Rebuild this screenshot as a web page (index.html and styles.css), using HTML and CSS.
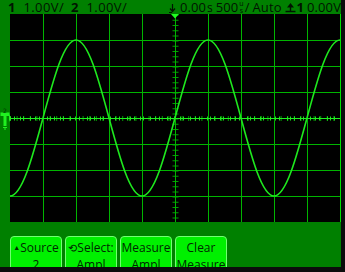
FILE: index.html
```html
<!DOCTYPE html>
<html>
<head>
<meta charset="utf-8">
<link rel="stylesheet" href="styles.css">
</head>
<body>
<div class="scope">
  <div class="topbar">
    <div class="chans">
      <b class="chn">1</b><span class="val">1.00V/</span>
      <b class="chn chn2">2</b><span class="val">1.00V/</span>
    </div>
    <div class="timebase">
      <svg class="trig-pos" width="8" height="10" viewBox="0 0 8 10"><path d="M4.5 1V8M2 5.5L4.5 8.5L7 5.5M1 9.5H4" fill="none" stroke="#001400" stroke-width="1.2"/></svg>
      <span class="val">0.00</span><span class="unit">s</span>
      <span class="val gapl">500</span><span class="frac"><span>u</span><span>s</span></span><span class="val">/</span>
      <span class="val gapl">Auto</span>
      <svg class="slope" width="11" height="11" viewBox="0 0 11 11"><path d="M5.5 1L9 5.5H2Z" fill="#001400"/><path d="M5.5 4V9M0.5 9.5H10.5" stroke="#001400" stroke-width="1.4"/></svg>
      <b class="chn">1</b><span class="val">0.00V</span>
    </div>
  </div>
  <div class="graticule">
    <svg width="331" height="208" viewBox="0 0 331 208">
      <rect width="330" height="208" fill="#000"/>
      <g stroke="#00b400" stroke-width="1">
        <path d="M33.5 0V208M66.5 0V208M99.5 0V208M132.5 0V208M198.5 0V208M231.5 0V208M264.5 0V208M297.5 0V208"/>
        <path d="M0 26.5H330M0 52.5H330M0 78.5H330M0 130.5H330M0 156.5H330M0 182.5H330"/>
      </g>
      <path d="M330.5 0V208" stroke="#00e000" stroke-width="1"/>
      <line x1="165.5" y1="0" x2="165.5" y2="208" stroke="#00a000" stroke-width="6" stroke-dasharray="1 4.2" style="stroke-dashoffset:-0.6"/>
      <line x1="165.5" y1="0" x2="165.5" y2="208" stroke="#00b400" stroke-width="1"/>
      <line x1="0" y1="104.5" x2="330" y2="104.5" stroke="#00a000" stroke-width="5" stroke-dasharray="1 5.6"/>
      <line x1="0" y1="104.5" x2="330" y2="104.5" stroke="#20e020" stroke-width="4" stroke-dasharray="1 3 1 5 1 2 1 6 1 4 1 3 1 7 1 2"/>
      <line x1="0" y1="104.5" x2="330" y2="104.5" stroke="#20f020" stroke-width="1.2"/>
      <path d="M161 0H169L165 4.5Z" fill="#20ff20"/>
      <path d="M0 182 c11.94 0 22.24 -38.04 33 -78 c10.76 -39.96 21.06 -78 33 -78 c11.94 0 22.24 38.04 33 78 c10.76 39.96 21.06 78 33 78 c11.94 0 22.24 -38.04 33 -78 c10.76 -39.96 21.06 -78 33 -78 c11.94 0 22.24 38.04 33 78 c10.76 39.96 21.06 78 33 78 c11.94 0 22.24 -38.04 33 -78 c10.76 -39.96 21.06 -78 33 -78" fill="none" stroke="#1ee81e" stroke-width="1.6"/>
    </svg>
    <svg class="ch-marker" width="11" height="22" viewBox="0 0 11 22">
      <path d="M0.5 4.5H9.5V8H6.5V18H3.5V8H0.5Z" fill="#20f020"/>
      <path d="M9 6L11 10L9 14Z" fill="#20f020"/>
      <path d="M3 19.5H7M4 21H6" stroke="#20f020" stroke-width="1"/>
      <text x="5" y="5" font-size="6" fill="#003000" text-anchor="middle" font-family="DejaVu Sans">2</text>
    </svg>
  </div>
  <div class="softkeys">
    <div class="key"><span><span class="tri">▲</span>Source</span><span>2</span></div>
    <div class="key"><span><span class="rot">⟲</span>Select:</span><span>Ampl</span></div>
    <div class="key"><span>Measure</span><span>Ampl</span></div>
    <div class="key"><span>Clear</span><span>Measure</span></div>
  </div>
</div>
</body>
</html>
```
FILE: styles.css
```css
html, body {
  margin: 0;
  padding: 0;
  background: #0c0c0c;
}
.scope {
  width: 341px;
  height: 267px;
  background: #008000;
  overflow: hidden;
  font-family: "Open Sans", "Noto Sans", sans-serif;
  color: #001400;
}
.topbar {
  height: 14px;
  display: flex;
  align-items: center;
  font-size: 13px;
  line-height: 14px;
  white-space: nowrap;
}
.chans {
  display: flex;
  align-items: center;
  padding-left: 8px;
  width: 163px;
}
.chn {
  font-weight: 700;
  margin-right: 8px;
}
.chn2 {
  margin-left: 7px;
}
.val {
  letter-spacing: 0.4px;
}
.timebase {
  display: flex;
  align-items: center;
}
.timebase .val {
  letter-spacing: 0.1px;
}
.trig-pos {
  margin-right: 4px;
  margin-top: 2px;
}
.unit {
  font-size: 12px;
  margin-top: 2px;
  margin-left: 1px;
}
.gapl {
  margin-left: 3px;
}
.frac {
  display: inline-flex;
  flex-direction: column;
  font-size: 7px;
  line-height: 7px;
  margin: 0 1px 0 1px;
  align-items: center;
}
.slope {
  margin: 0 1px 0 3px;
}
.timebase .chn {
  margin-right: 3px;
}
.graticule {
  position: relative;
  margin-left: 10px;
  width: 331px;
  height: 208px;
}
.graticule > svg:first-child {
  display: block;
}
.ch-marker {
  position: absolute;
  left: -10px;
  top: 94px;
}
.softkeys {
  display: flex;
  gap: 3px;
  padding-left: 10px;
  margin-top: 14px;
}
.key {
  width: 50px;
  height: 40px;
  background: #00f000;
  border: 1px solid #70ff70;
  border-radius: 4px;
  display: flex;
  flex-direction: column;
  align-items: center;
  font-size: 12px;
  line-height: 17px;
  padding-top: 2px;
  color: #002800;
  box-sizing: content-box;
}
.key span {
  white-space: nowrap;
}
.tri {
  font-size: 7px;
  vertical-align: 2px;
}
.rot {
  font-size: 11px;
}
```
